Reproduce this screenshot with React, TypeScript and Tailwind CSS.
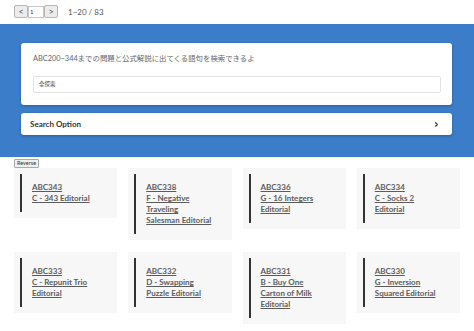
import { ChevronRight } from 'lucide-react';

const problems = [
  { contest: 'ABC343', title: 'C - 343 Editorial' },
  { contest: 'ABC338', title: 'F - Negative Traveling Salesman Editorial' },
  { contest: 'ABC336', title: 'G - 16 Integers Editorial' },
  { contest: 'ABC334', title: 'C - Socks 2 Editorial' },
  { contest: 'ABC333', title: 'C - Repunit Trio Editorial' },
  { contest: 'ABC332', title: 'D - Swapping Puzzle Editorial' },
  { contest: 'ABC331', title: 'B - Buy One Carton of Milk Editorial' },
  { contest: 'ABC330', title: 'G - Inversion Squared Editorial' },
];

export default function App() {
  return (
    <div
      className="w-[474px] h-[331px] overflow-hidden bg-white text-[#444]"
      style={{ fontFamily: 'Lato, "Noto Sans CJK JP", sans-serif' }}
    >
      {/* Pager */}
      <div className="flex items-center h-[24px] pl-[14px] pb-[1px]">
        <button className="h-[13px] w-[14px] bg-[#ececec] border border-[#b5b5b5] rounded-[2px] text-[9px] leading-none text-[#555] flex items-center justify-center">
          &lt;
        </button>
        <input
          defaultValue="1"
          className="h-[12px] w-[16px] border border-[#c8c8c8] text-[6px] px-[1px] text-[#333] outline-none"
        />
        <button className="h-[13px] w-[14px] bg-[#ececec] border border-[#b5b5b5] rounded-[2px] text-[9px] leading-none text-[#555] flex items-center justify-center">
          &gt;
        </button>
        <span className="ml-[10px] text-[8px] text-[#555]">1~20 / 83</span>
      </div>

      {/* Search banner */}
      <div className="bg-[#3b7dc8] pt-[19px] pb-[22px] pl-[21px] pr-[22px] flex flex-col gap-[8px]">
        <div className="bg-white rounded-[3px] shadow-[0_1px_3px_rgba(0,0,0,0.25)] h-[62px] pl-[12px] pr-[11px] pt-[11px]">
          <p className="text-[7.4px] text-[#666] leading-[10px]">ABC200~344までの問題と公式解説に出てくる語句を検索できるよ</p>
          <div className="mt-[12px] h-[17px] border border-[#e3e3e3] rounded-[2px] flex items-center px-[5px]">
            <span className="text-[5.5px] text-[#444]">全探索</span>
          </div>
        </div>
        <div className="bg-white rounded-[3px] shadow-[0_1px_3px_rgba(0,0,0,0.25)] h-[22px] flex items-center justify-between pl-[9px] pr-[12px]">
          <span className="text-[8px] font-bold text-[#333]">Search Option</span>
          <ChevronRight size={7} strokeWidth={4} className="text-[#333]" />
        </div>
      </div>

      {/* Results */}
      <div className="px-[14px] pt-[2px]">
        <button className="h-[9px] px-[2px] bg-[#efefef] border border-[#aaa] rounded-[1px] text-[5.5px] leading-none text-[#333] flex items-center">
          Reverse
        </button>
        <div className="grid grid-cols-4 gap-x-[11px] gap-y-[12px] items-start">
          {problems.map((p) => (
            <div key={p.contest} className="bg-[#f7f7f7] p-[6px]">
              <div className="border-l-2 border-[#333] pl-[10px] pr-[14px] py-[8px] text-[8px] leading-[11px] font-bold text-[#5c5c5c]">
                <a className="underline block">{p.contest}</a>
                <a className="underline block">{p.title}</a>
              </div>
            </div>
          ))}
        </div>
      </div>
    </div>
  );
}
